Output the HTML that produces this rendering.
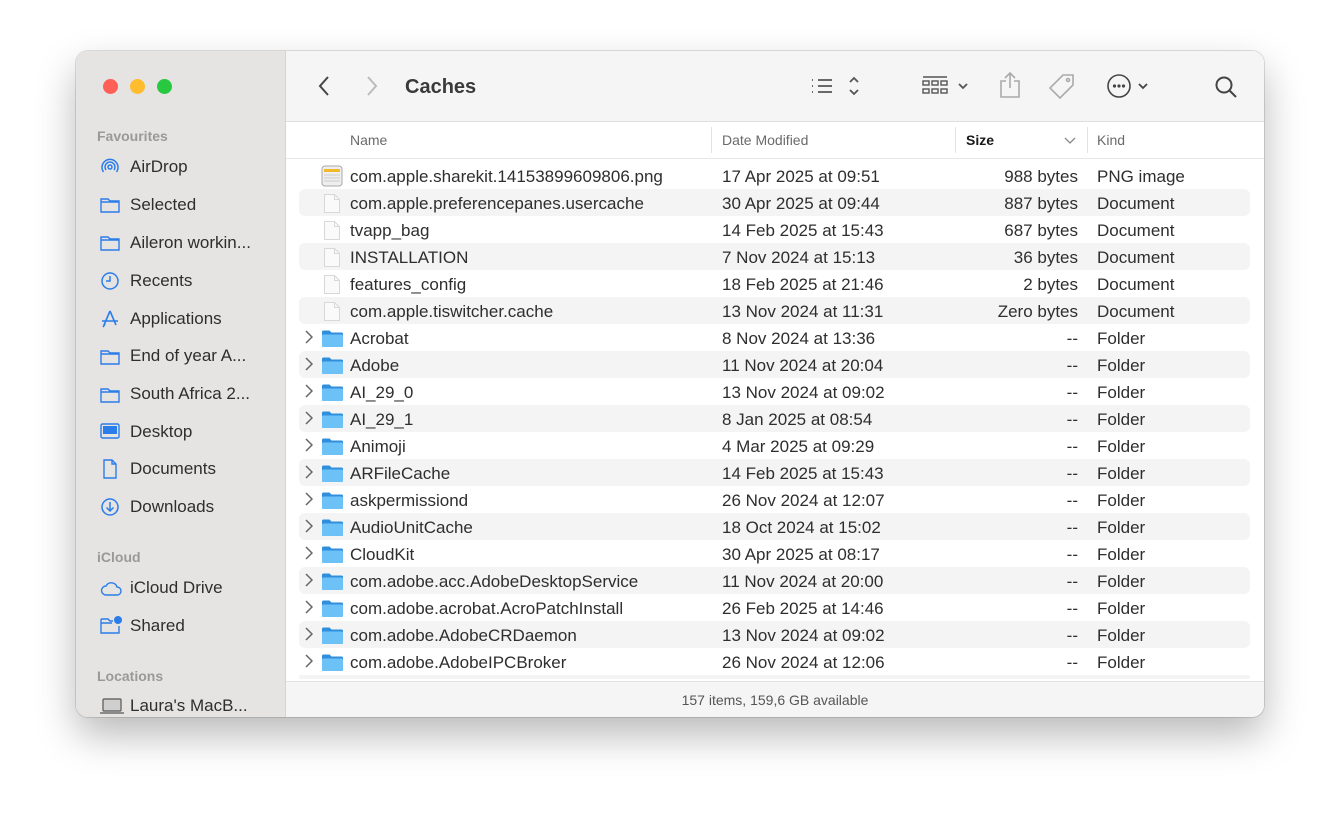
<!DOCTYPE html><html><head><meta charset="utf-8"><style>
*{margin:0;padding:0;box-sizing:border-box}
body{width:1340px;height:818px;background:#fff;font-family:"Liberation Sans",sans-serif;position:relative;overflow:hidden}
.win{position:absolute;left:76px;top:51px;width:1188px;height:666px;border-radius:12px;overflow:hidden;box-shadow:0 18px 40px rgba(0,0,0,.28),0 0 0 1px rgba(0,0,0,.12);background:#fff}
.side{position:absolute;left:0;top:0;width:210px;height:666px;background:#e6e4e3;border-right:1px solid #d6d4d3}
.dot{position:absolute;top:28px;width:15px;height:15px;border-radius:50%}
.sh{position:absolute;left:21px;font-size:14px;color:#9b9998;font-weight:bold}
.si{position:absolute;left:54px;font-size:17px;color:#2e2e2e}
.ic{position:absolute;left:24px}
.tb{position:absolute;left:210px;top:0;right:0;height:71px;background:#f6f5f5;border-bottom:1px solid #e0dfdf}
.hdr{position:absolute;left:210px;top:72px;right:0;height:36px;background:#fff;border-bottom:1px solid #e8e8e8;font-size:14px;color:#6a6a6a}
.hdr span{position:absolute;top:9px}
.sep{position:absolute;top:4px;width:1px;height:26px;background:#e2e2e2}
.row{position:absolute;left:223px;width:951px;height:27px;border-radius:6px;font-size:17px;color:#2e2e2e}
.row.alt{background:#f4f4f4}
.row span{position:absolute;top:5px;white-space:nowrap}
.n{left:51px}.d{left:423px}.s{right:172px;text-align:right}.k{left:798px}
.chev{position:absolute;left:6px;top:6px}
.fi{position:absolute;left:23px;top:5px}
.st{position:absolute;left:210px;right:0;top:630px;height:36px;background:#f6f5f5;border-top:1px solid #e2e2e2;text-align:center;font-size:14px;color:#555;padding-top:10px}
</style></head><body>
<div class="win">
<div class="side">
<div class="dot" style="left:27px;background:#fe5f57"></div>
<div class="dot" style="left:54px;background:#febc2e"></div>
<div class="dot" style="left:81px;background:#28c840"></div>
<div class="sh" style="top:77px">Favourites</div>
<svg class="ic" style="top:106px" width="20" height="20" viewBox="0 0 20 20" fill="none" stroke="#2b7de9" stroke-width="1.5"><circle cx="10" cy="10" r="2"/><path d="M6 13a5 5 0 1 1 8 0M3.5 15a8 8 0 1 1 13 0"/></svg>
<div class="si" style="top:106px">AirDrop</div>
<svg class="ic" style="top:145px" width="20" height="17" viewBox="0 0 20 17" fill="none" stroke="#2b7de9" stroke-width="1.4"><path d="M1 3h7l2 2h9v11H1z M1 6h18"/></svg>
<div class="si" style="top:144px">Selected</div>
<svg class="ic" style="top:183px" width="20" height="17" viewBox="0 0 20 17" fill="none" stroke="#2b7de9" stroke-width="1.4"><path d="M1 3h7l2 2h9v11H1z M1 6h18"/></svg>
<div class="si" style="top:182px">Aileron workin...</div>
<svg class="ic" style="top:220px" width="20" height="20" viewBox="0 0 20 20" fill="none" stroke="#2b7de9" stroke-width="1.5"><circle cx="10" cy="10" r="8"/><path d="M10 5v5H6"/></svg>
<div class="si" style="top:220px">Recents</div>
<svg class="ic" style="top:258px" width="20" height="20" viewBox="0 0 20 20" fill="none" stroke="#2b7de9" stroke-width="1.6"><path d="M10 2L4 16M10 2l6 14M2 12h16M3 18l2-3"/></svg>
<div class="si" style="top:258px">Applications</div>
<svg class="ic" style="top:297px" width="20" height="17" viewBox="0 0 20 17" fill="none" stroke="#2b7de9" stroke-width="1.4"><path d="M1 3h7l2 2h9v11H1z M1 6h18"/></svg>
<div class="si" style="top:295px">End of year A...</div>
<svg class="ic" style="top:335px" width="20" height="17" viewBox="0 0 20 17" fill="none" stroke="#2b7de9" stroke-width="1.4"><path d="M1 3h7l2 2h9v11H1z M1 6h18"/></svg>
<div class="si" style="top:333px">South Africa 2...</div>
<svg class="ic" style="top:372px" width="20" height="17" viewBox="0 0 20 17" fill="none" stroke="#2b7de9" stroke-width="1.4"><rect x="1" y="1" width="18" height="14" rx="1.5"/><rect x="3" y="3" width="14" height="8" fill="#2b7de9" stroke="none"/></svg>
<div class="si" style="top:371px">Desktop</div>
<svg class="ic" style="top:408px" width="20" height="20" viewBox="0 0 20 20" fill="none" stroke="#2b7de9" stroke-width="1.4"><path d="M4 1h8l4 4v14H4z M12 1v4h4"/></svg>
<div class="si" style="top:408px">Documents</div>
<svg class="ic" style="top:446px" width="20" height="20" viewBox="0 0 20 20" fill="none" stroke="#2b7de9" stroke-width="1.5"><circle cx="10" cy="10" r="8"/><path d="M10 5v9M6.5 10.5L10 14l3.5-3.5"/></svg>
<div class="si" style="top:446px">Downloads</div>
<div class="sh" style="top:498px">iCloud</div>
<svg class="ic" style="top:529px" width="22" height="16" viewBox="0 0 22 16" fill="none" stroke="#2b7de9" stroke-width="1.4"><path d="M6 15h11a4 4 0 0 0 0-8 6 6 0 0 0-11-1 4.5 4.5 0 0 0 0 9z"/></svg>
<div class="si" style="top:527px">iCloud Drive</div>
<svg class="ic" style="top:565px" width="22" height="18" viewBox="0 0 22 18" fill="none" stroke="#2b7de9" stroke-width="1.4"><path d="M1 3h7l2 2h3M19 10v7H1V3M1 7h11"/><circle cx="18" cy="4" r="3.3" fill="#2b7de9"/></svg>
<div class="si" style="top:565px">Shared</div>
<div class="sh" style="top:617px">Locations</div>
<svg class="ic" style="top:647px" width="24" height="16" viewBox="0 0 24 16" fill="#cfcfcf" stroke="#555" stroke-width="1.2"><rect x="3" y="1" width="18" height="12" rx="1"/><path d="M0 15h24"/></svg>
<div class="si" style="top:645px">Laura's MacB...</div>
</div>
<div class="tb">
<svg style="position:absolute;left:32px;top:25px" width="12" height="20" viewBox="0 0 12 20" fill="none" stroke="#444" stroke-width="2"><path d="M10 1L2 10l8 9"/></svg>
<svg style="position:absolute;left:80px;top:25px" width="12" height="20" viewBox="0 0 12 20" fill="none" stroke="#bbb" stroke-width="2"><path d="M2 1l8 9-8 9"/></svg>
<div style="position:absolute;left:119px;top:25px;font-size:20px;color:#3a3a3a;font-weight:bold">Caches</div>
<svg style="position:absolute;left:524px;top:24px" width="60" height="22" viewBox="0 0 60 22" fill="none" stroke="#555" stroke-width="1.8"><path d="M8 5h14M8 11h14M8 17h14M2 5h1M2 11h1M2 17h1M40 7l4-4 4 4M40 15l4 4 4-4"/></svg>
<svg style="position:absolute;left:636px;top:24px" width="50" height="22" viewBox="0 0 50 22" fill="none" stroke="#555" stroke-width="1.4"><path d="M1 2h24"/><rect x="1" y="6" width="6" height="4"/><rect x="10" y="6" width="6" height="4"/><rect x="19" y="6" width="6" height="4"/><rect x="1" y="14" width="6" height="4"/><rect x="10" y="14" width="6" height="4"/><rect x="19" y="14" width="6" height="4"/><path d="M37 9l4 4 4-4" stroke-width="1.8"/></svg>
<svg style="position:absolute;left:712px;top:20px" width="24" height="28" viewBox="0 0 24 28" fill="none" stroke="#aaa" stroke-width="1.6"><path d="M8 10H3v16h18V10h-5M12 2v15M7 7l5-5 5 5"/></svg>
<svg style="position:absolute;left:762px;top:22px" width="28" height="28" viewBox="0 0 28 28" fill="none" stroke="#aaa" stroke-width="1.6"><path d="M15 2h10v10L12 25 2 15z"/><circle cx="20" cy="7" r="1.5"/></svg>
<svg style="position:absolute;left:820px;top:22px" width="52" height="26" viewBox="0 0 52 26" fill="none" stroke="#444" stroke-width="1.6"><circle cx="13" cy="13" r="11"/><circle cx="8.5" cy="13" r=".8" fill="#444"/><circle cx="13" cy="13" r=".8" fill="#444"/><circle cx="17.5" cy="13" r=".8" fill="#444"/><path d="M33 11l4 4 4-4" stroke-width="1.8"/></svg>
<svg style="position:absolute;left:928px;top:24px" width="24" height="24" viewBox="0 0 24 24" fill="none" stroke="#444" stroke-width="2"><circle cx="10" cy="10" r="7.5"/><path d="M15.5 15.5L22 22"/></svg>
</div>
<div class="hdr">
<span style="left:64px">Name</span>
<div class="sep" style="left:425px"></div>
<span style="left:436px">Date Modified</span>
<div class="sep" style="left:669px"></div>
<span style="left:680px;color:#1a1a1a;font-weight:bold">Size</span>
<svg style="position:absolute;left:778px;top:14px" width="12" height="8" viewBox="0 0 12 8" fill="none" stroke="#888" stroke-width="1.3"><path d="M1 1l5 5 5-5"/></svg>
<div class="sep" style="left:801px"></div>
<span style="left:811px">Kind</span>
</div>
<div id="rows"></div>
<div class="st">157 items, 159,6 GB available</div>
</div>
<script>
var d=[["com.apple.sharekit.14153899609806.png","17 Apr 2025 at 09:51","988 bytes","PNG image","p"],
["com.apple.preferencepanes.usercache","30 Apr 2025 at 09:44","887 bytes","Document","f"],
["tvapp_bag","14 Feb 2025 at 15:43","687 bytes","Document","f"],
["INSTALLATION","7 Nov 2024 at 15:13","36 bytes","Document","f"],
["features_config","18 Feb 2025 at 21:46","2 bytes","Document","f"],
["com.apple.tiswitcher.cache","13 Nov 2024 at 11:31","Zero bytes","Document","f"],
["Acrobat","8 Nov 2024 at 13:36"],["Adobe","11 Nov 2024 at 20:04"],["AI_29_0","13 Nov 2024 at 09:02"],["AI_29_1","8 Jan 2025 at 08:54"],["Animoji","4 Mar 2025 at 09:29"],["ARFileCache","14 Feb 2025 at 15:43"],["askpermissiond","26 Nov 2024 at 12:07"],["AudioUnitCache","18 Oct 2024 at 15:02"],["CloudKit","30 Apr 2025 at 08:17"],["com.adobe.acc.AdobeDesktopService","11 Nov 2024 at 20:00"],["com.adobe.acrobat.AcroPatchInstall","26 Feb 2025 at 14:46"],["com.adobe.AdobeCRDaemon","13 Nov 2024 at 09:02"],["com.adobe.AdobeIPCBroker","26 Nov 2024 at 12:06"],["",""]];
var h="";
d.forEach(function(r,i){
 var top=111+i*27;
 var icon;
 if(r[4]=="p")icon='<svg class="fi" style="left:22px;top:3px" width="22" height="22" viewBox="0 0 22 22"><rect x="1" y="1" width="20" height="20" rx="3" fill="#eee" stroke="#aaa"/><rect x="3" y="4" width="16" height="3" fill="#f0b92e"/><path d="M3 10h16M3 13h16M3 16h16" stroke="#ccc"/></svg>';
 else if(r[4]=="f")icon='<svg class="fi" style="left:25px" width="16" height="19" viewBox="0 0 16 19"><path d="M.5.5h10l5 5v13H.5z" fill="#fafafa" stroke="#d8d8d8"/><path d="M10.5.5v5h5" fill="none" stroke="#d8d8d8"/></svg>';
 else icon='<svg class="chev" width="8" height="14" viewBox="0 0 8 14" fill="none" stroke="#666" stroke-width="1.5"><path d="M1 1l6 6-6 6"/></svg><svg class="fi" style="top:6px" width="21" height="17" viewBox="0 0 21 17"><path d="M0 2a1.5 1.5 0 0 1 1.5-1.5h6l2 2h10A1.5 1.5 0 0 1 21 4v11.5a1.5 1.5 0 0 1-1.5 1.5h-18A1.5 1.5 0 0 1 0 15.5z" fill="#2f8fdc"/><rect x="0" y="4.5" width="21" height="12.5" rx="1.5" fill="#6cc1f7"/></svg>';
 if(i==19){h+='<div class="row'+(i%2?' alt':'')+'" style="top:'+top+'px;height:4px"></div>';return;}
 h+='<div class="row'+(i%2?' alt':'')+'" style="top:'+top+'px">'+icon+'<span class="n">'+r[0]+'</span><span class="d">'+r[1]+'</span><span class="s">'+(r[2]||'--')+'</span><span class="k">'+(r[3]||'Folder')+'</span></div>';
});
document.getElementById('rows').innerHTML=h;
</script>
</body></html>
